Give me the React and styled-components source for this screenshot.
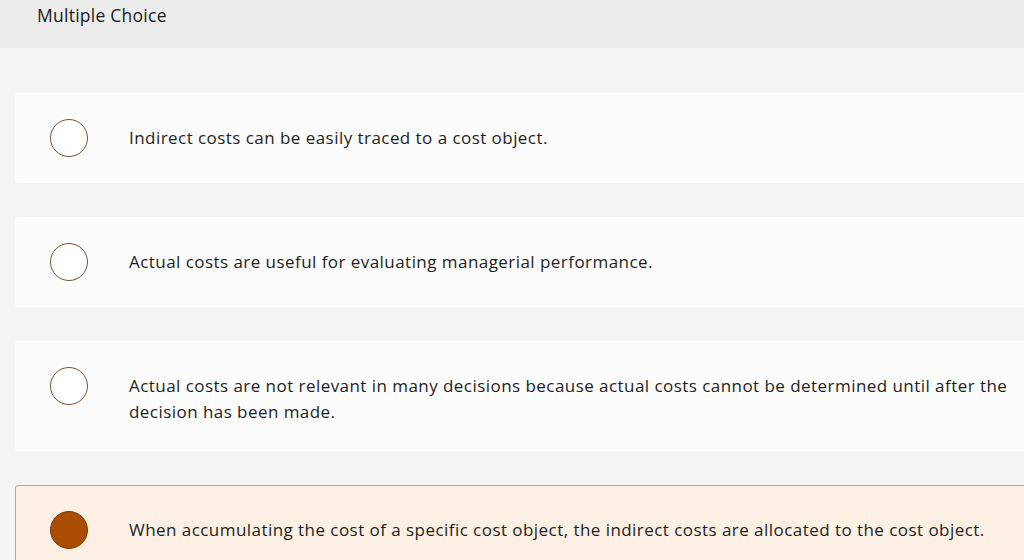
import styled, { createGlobalStyle } from "styled-components";

const Global = createGlobalStyle`
  html, body {
    margin: 0;
    padding: 0;
    background: #f4f4f4;
    overflow: hidden;
  }
  body {
    font-family: "Open Sans", Lato, sans-serif;
    color: #1c1c1c;
  }
`;

const Page = styled.div`
  width: 1024px;
  height: 560px;
  overflow: hidden;
`;

const Header = styled.div`
  height: 48px;
  background: #ececec;
  padding: 3px 0 0 37px;
  box-sizing: border-box;
  font-size: 17.5px;
  letter-spacing: 0.25px;
  color: #1a1a1a;
`;

const List = styled.div`
  display: flex;
  flex-direction: column;
  gap: 34px;
  padding: 45px 0 0 15px;
`;

const Option = styled.div`
  display: flex;
  align-items: flex-start;
  box-sizing: border-box;
  width: 1020px;
  padding: 25px 12px 25px 34px;
  background: ${(p) => (p.$selected ? "#fcf0e4" : "#fcfcfc")};
  border: ${(p) => (p.$selected ? "1px solid #c4a284" : "1px solid transparent")};
  border-radius: 3px;
`;

const Radio = styled.span`
  flex: none;
  width: 38px;
  height: 38px;
  border-radius: 50%;
  box-sizing: border-box;
  border: 1.5px solid ${(p) => (p.$checked ? "#7e3a06" : "#7a4f2c")};
  background: ${(p) => (p.$checked ? "#a84d02" : "#fff")};
  margin-right: 41px;
`;

const Label = styled.div`
  margin-top: 6px;
  font-size: 17px;
  line-height: 26px;
  letter-spacing: 0.45px;
  color: #1e1e1e;
`;

const options = [
  { text: "Indirect costs can be easily traced to a cost object." },
  { text: "Actual costs are useful for evaluating managerial performance." },
  {
    text: "Actual costs are not relevant in many decisions because actual costs cannot be determined until after the decision has been made.",
  },
  {
    text: "When accumulating the cost of a specific cost object, the indirect costs are allocated to the cost object.",
    selected: true,
  },
];

export default function App() {
  return (
    <Page>
      <Global />
      <Header>Multiple Choice</Header>
      <List>
        {options.map((o, i) => (
          <Option key={i} $selected={o.selected}>
            <Radio $checked={o.selected} />
            <Label>{o.text}</Label>
          </Option>
        ))}
      </List>
    </Page>
  );
}
